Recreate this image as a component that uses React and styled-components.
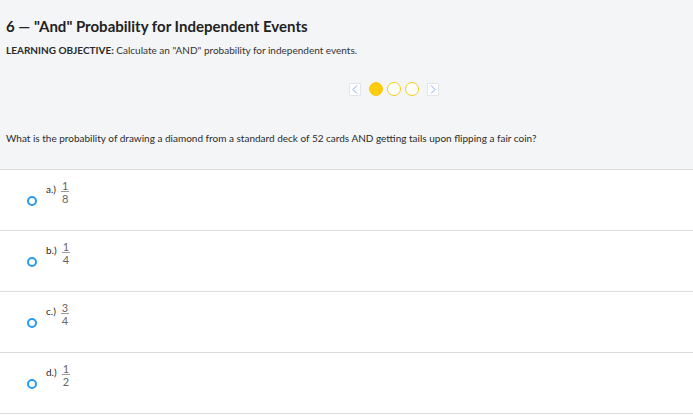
import React from 'react';
import styled, { createGlobalStyle } from 'styled-components';

const GlobalStyle = createGlobalStyle`
  body {
    margin: 0;
    background: #ffffff;
    font-family: Lato, "Open Sans", "Liberation Sans", sans-serif;
    color: #2b2b2b;
  }
`;

const options = [
  { letter: 'a.)', num: '1', den: '8' },
  { letter: 'b.)', num: '1', den: '4' },
  { letter: 'c.)', num: '3', den: '4' },
  { letter: 'd.)', num: '1', den: '2' },
];

const App = () => {
  return (
    <>
      <GlobalStyle />
      <StyledPage>
        <StyledHeader>
          <StyledTitle>6 — "And" Probability for Independent Events</StyledTitle>
          <StyledObjective>
            <strong>LEARNING OBJECTIVE:</strong> Calculate an "AND" probability for independent events.
          </StyledObjective>
          <StyledPager>
            <StyledArrow aria-label="previous">
              <svg width="6" height="9" viewBox="0 0 6 9">
                <path d="M5 0.5 L1 4.5 L5 8.5" fill="none" stroke="#7fa9ea" strokeWidth="1" />
              </svg>
            </StyledArrow>
            <StyledDots>
              <StyledDot $active />
              <StyledDot />
              <StyledDot />
            </StyledDots>
            <StyledArrow aria-label="next">
              <svg width="6" height="9" viewBox="0 0 6 9">
                <path d="M1 0.5 L5 4.5 L1 8.5" fill="none" stroke="#7fa9ea" strokeWidth="1" />
              </svg>
            </StyledArrow>
          </StyledPager>
          <StyledQuestion>
            What is the probability of drawing a diamond from a standard deck of 52 cards AND getting tails upon flipping a fair coin?
          </StyledQuestion>
        </StyledHeader>
        <StyledOptionList>
          {options.map((o) => (
            <StyledOption key={o.letter}>
              <StyledRadio />
              <StyledLetter>{o.letter}</StyledLetter>
              <StyledFraction>
                <StyledNum>{o.num}</StyledNum>
                <StyledDen>{o.den}</StyledDen>
              </StyledFraction>
            </StyledOption>
          ))}
        </StyledOptionList>
      </StyledPage>
    </>
  );
};

export default App;

const StyledPage = styled.div`
  width: 693px;
  min-height: 416px;
`;

const StyledHeader = styled.div`
  background-color: #f4f5f7;
  padding: 17px 6px 0;
  height: 152px;
  border-bottom: 1px solid #dcdcdc;
`;

const StyledTitle = styled.h1`
  margin: 0;
  font-size: 15px;
  line-height: 18px;
  font-weight: 700;
  color: #222222;
`;

const StyledObjective = styled.p`
  margin: 9px 0 0;
  font-size: 10px;
  line-height: 12px;
  color: #333333;

  strong {
    font-weight: 700;
    color: #2a2a2a;
  }
`;

const StyledPager = styled.div`
  display: flex;
  align-items: center;
  justify-content: center;
  gap: 8px;
  margin-top: 26px;
  padding-left: 94px;
  height: 14px;
`;

const StyledArrow = styled.div`
  width: 12px;
  height: 13px;
  box-sizing: border-box;
  background: #ffffff;
  border: 1px solid #e1e4ea;
  border-radius: 1px;
  display: flex;
  align-items: center;
  justify-content: center;
`;

const StyledDots = styled.div`
  display: flex;
  gap: 4px;
`;

const StyledDot = styled.div`
  width: 14px;
  height: 14px;
  box-sizing: border-box;
  border-radius: 50%;
  border: 1.5px solid #f5cc15;
  background: ${(props) => (props.$active ? '#fdcc0d' : '#ffffff')};
`;

const StyledQuestion = styled.p`
  margin: 36px 0 0;
  font-size: 10px;
  line-height: 12px;
  color: #2b2b2b;
`;

const StyledOptionList = styled.div`
  display: flex;
  flex-direction: column;
`;

const StyledOption = styled.div`
  display: flex;
  align-items: flex-start;
  height: 60px;
  border-bottom: 1px solid #dcdcdc;
  padding-left: 27px;
`;

const StyledRadio = styled.div`
  width: 10px;
  height: 10px;
  box-sizing: border-box;
  border: 2px solid #2a9bf2;
  border-radius: 50%;
  margin-top: 26px;
`;

const StyledLetter = styled.span`
  margin: 13px 0 0 9px;
  font-size: 10px;
  line-height: 12px;
  color: #1f1f1f;
`;

const StyledFraction = styled.span`
  display: inline-flex;
  flex-direction: column;
  align-items: center;
  margin: 10px 0 0 5px;
  font-size: 11px;
  line-height: 11px;
  color: #666666;
  min-width: 8px;
`;

const StyledNum = styled.span`
  padding: 0 1px;
  border-bottom: 1px solid #9a9a9a;
`;

const StyledDen = styled.span`
  padding-top: 1px;
`;
